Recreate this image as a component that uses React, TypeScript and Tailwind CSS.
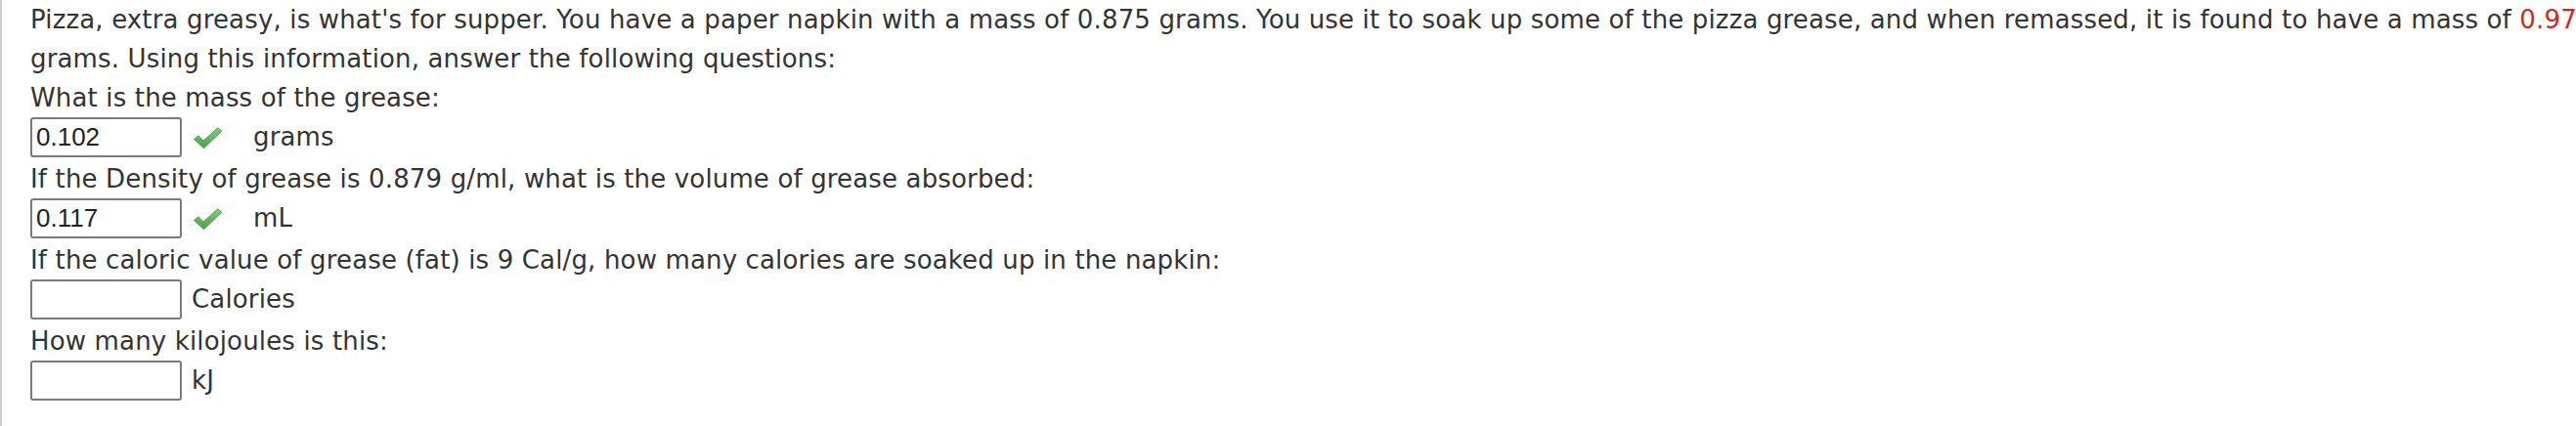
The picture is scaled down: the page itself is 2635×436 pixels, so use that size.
import React from 'react';

function Check() {
  return (
    <svg width="31" height="24" viewBox="0 0 31 24" className="mx-[11px] shrink-0">
      <defs>
        <linearGradient id="chk" x1="0" y1="0" x2="0" y2="1">
          <stop offset="0%" stopColor="#82d07c" />
          <stop offset="100%" stopColor="#4a9f47" />
        </linearGradient>
      </defs>
      <path
        d="M1.5 13.5 L6 9.8 L11 15 L25.8 1.8 L29.8 5.2 L11.5 22.8 Z"
        fill="url(#chk)"
        stroke="#5b9a57"
        strokeWidth="1"
        strokeLinejoin="round"
      />
    </svg>
  );
}

type Question = {
  label: string;
  value: string;
  unit: string;
  correct: boolean;
};

const questions: Question[] = [
  { label: 'What is the mass of the grease:', value: '0.102', unit: 'grams', correct: true },
  {
    label: 'If the Density of grease is 0.879 g/ml, what is the volume of grease absorbed:',
    value: '0.117',
    unit: 'mL',
    correct: true,
  },
  {
    label: 'If the caloric value of grease (fat) is 9 Cal/g, how many calories are soaked up in the napkin:',
    value: '',
    unit: 'Calories',
    correct: false,
  },
  { label: 'How many kilojoules is this:', value: '', unit: 'kJ', correct: false },
];

export default function App() {
  return (
    <div className="h-[436px] w-full overflow-hidden border-l-2 border-[#cccccc] bg-white">
      <div className="pl-[29px] font-['DejaVu_Sans',Verdana,sans-serif] text-[26px] leading-[40px] tracking-[0.15px] text-[#333333]">
        <p className="whitespace-nowrap">
          Pizza, extra greasy, is what's for supper. You have a paper napkin with a mass of 0.875 grams. You
          use it to soak up some of the pizza grease, and when remassed, it is found to have a mass of{' '}
          <span className="text-[#d0281d]">0.977</span>
        </p>
        <p>grams. Using this information, answer the following questions:</p>

        {questions.map((q) => (
          <div key={q.label}>
            <div>{q.label}</div>
            <div className="flex h-[43px] items-start">
              <input
                readOnly
                value={q.value}
                className="h-[41px] w-[155px] shrink-0 rounded-[3px] border-2 border-[#7a7a7a] bg-white px-[4px] font-['Liberation_Sans',Arial,sans-serif] text-[26px] tracking-normal text-[#222222] outline-none"
              />
              {q.correct ? (
                <div className="flex h-[41px] items-center">
                  <Check />
                  <span className="ml-[20px] leading-[41px]">{q.unit}</span>
                </div>
              ) : (
                <span className="ml-[10px] leading-[41px]">{q.unit}</span>
              )}
            </div>
          </div>
        ))}
      </div>
    </div>
  );
}
